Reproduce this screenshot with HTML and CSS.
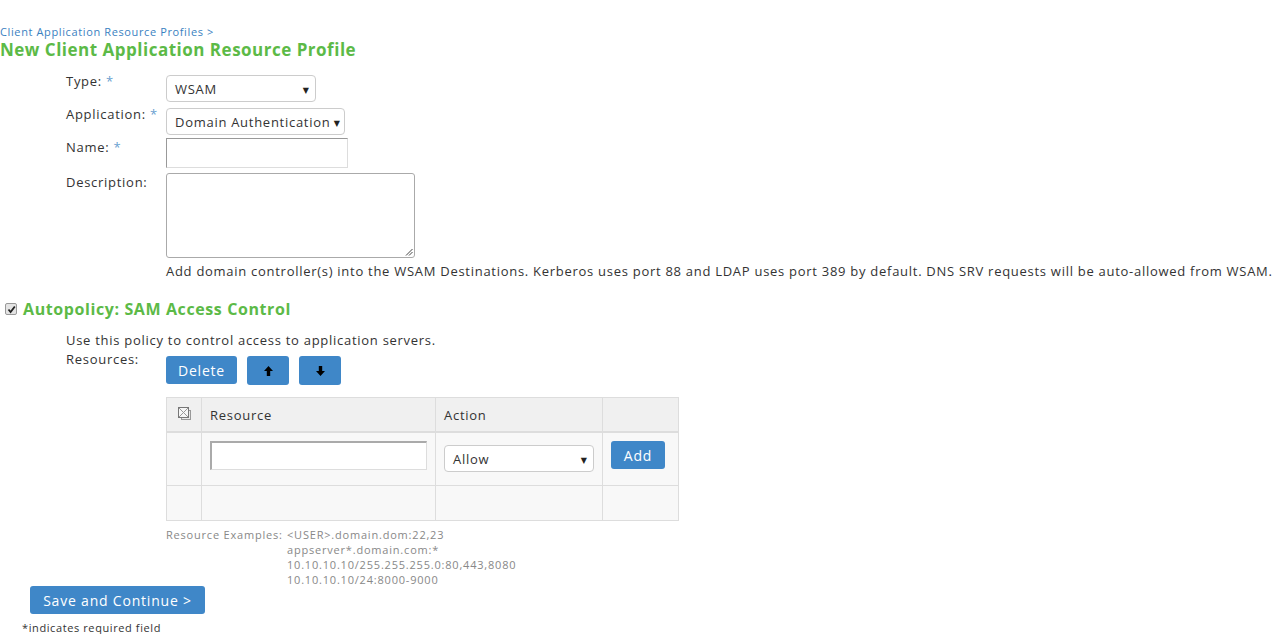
FILE: index.html
```html
<!DOCTYPE html>
<html>
<head>
<meta charset="utf-8">
<link rel="stylesheet" href="styles.css">
</head>
<body>
<div class="page">
  <div class="crumb"><a href="#">Client Application Resource Profiles</a> &gt;</div>
  <h1 class="title">New Client Application Resource Profile</h1>

  <div class="form">
    <div class="row r-type">
      <div class="label">Type: <span class="req">*</span></div>
      <div class="field f-sel"><div class="select s-type"><span>WSAM</span><span class="caret">▼</span></div></div>
    </div>
    <div class="row r-app">
      <div class="label">Application: <span class="req">*</span></div>
      <div class="field f-sel"><div class="select s-app"><span>Domain Authentication</span><span class="caret">▼</span></div></div>
    </div>
    <div class="row r-name">
      <div class="label">Name: <span class="req">*</span></div>
      <div class="field"><div class="input i-name"></div></div>
    </div>
    <div class="row r-desc">
      <div class="label">Description:</div>
      <div class="field">
        <div class="textarea"><svg class="grip" width="9" height="9" viewBox="0 0 9 9"><path d="M8.5 2 L2 8.5 M8.5 5 L5 8.5" stroke="#444" stroke-width="1"/></svg></div>
        <div class="help">Add domain controller(s) into the WSAM Destinations. Kerberos uses port 88 and LDAP uses port 389 by default. DNS SRV requests will be auto-allowed from WSAM.</div>
      </div>
    </div>
  </div>

  <div class="section">
    <span class="check"><svg width="9" height="9" viewBox="0 0 9 9"><path d="M1.5 4.5 L3.6 7 L7.8 1.5" fill="none" stroke="#222" stroke-width="1.8"/></svg></span>
    <h2 class="subtitle">Autopolicy: SAM Access Control</h2>
  </div>

  <div class="policy">
    <div class="intro">Use this policy to control access to application servers.</div>
    <div class="res-row">
      <div class="label">Resources:</div>
      <div class="field">
        <div class="toolbar">
          <button class="btn btn-del">Delete</button>
          <button class="btn btn-arrow"><svg width="9" height="10" viewBox="0 0 9 10"><path d="M4.5 0 L9 5 L6.2 5 L6.2 10 L2.8 10 L2.8 5 L0 5 Z" fill="#000"/></svg></button>
          <button class="btn btn-arrow"><svg width="9" height="10" viewBox="0 0 9 10"><path d="M4.5 10 L9 5 L6.2 5 L6.2 0 L2.8 0 L2.8 5 L0 5 Z" fill="#000"/></svg></button>
        </div>
        <div class="table">
          <div class="cell hd c1"><svg width="13" height="13" viewBox="0 0 13 13"><rect x="3.5" y="3.5" width="9" height="9" fill="#e8e8e8" stroke="#999"/><rect x="0.5" y="0.5" width="10" height="10" fill="#f6f6f6" stroke="#777"/><path d="M1 1 L10 10 M10 1 L1 10" stroke="#999"/></svg></div>
          <div class="cell hd">Resource</div>
          <div class="cell hd">Action</div>
          <div class="cell hd"></div>
          <div class="cell bd"></div>
          <div class="cell bd"><div class="input i-res"></div></div>
          <div class="cell bd"><div class="select s-allow"><span>Allow</span><span class="caret">▼</span></div></div>
          <div class="cell bd"><button class="btn btn-add">Add</button></div>
          <div class="cell ft"></div>
          <div class="cell ft"></div>
          <div class="cell ft"></div>
          <div class="cell ft"></div>
        </div>
        <div class="examples">
          <div class="ex-label">Resource Examples:</div>
          <div class="ex-list">
            <div>&lt;USER&gt;.domain.dom:22,23</div>
            <div>appserver*.domain.com:*</div>
            <div>10.10.10.10/255.255.255.0:80,443,8080</div>
            <div>10.10.10.10/24:8000-9000</div>
          </div>
        </div>
      </div>
    </div>
  </div>

  <div class="actions">
    <button class="btn btn-save">Save and Continue &gt;</button>
  </div>
  <div class="note">*indicates required field</div>
</div>
</body>
</html>
```

FILE: styles.css
```css
* { box-sizing: border-box; }
html, body { margin: 0; padding: 0; background: #fff; }
body {
  font-family: "Open Sans", "DejaVu Sans", sans-serif;
  font-size: 13px;
  letter-spacing: 0.72px;
  color: #333;
}
.page { padding-top: 24px; }
.crumb { font-size: 11px; line-height: 16px; letter-spacing: 0.62px; color: #3a7fc1; }
.crumb a { color: #3a7fc1; text-decoration: none; }
.title {
  margin: 0;
  font-size: 17px;
  line-height: 20px;
  letter-spacing: 0.5px;
  font-weight: 700;
  color: #5cba47;
}
.form { padding-left: 66px; margin-top: 12px; }
.row { display: flex; align-items: flex-start; }
.label { width: 100px; line-height: 18px; flex: none; }
.req { color: #6a9fd0; }
.field { display: flex; flex-direction: column; }
.f-sel { padding-top: 3px; }
.r-type { height: 33px; }
.r-app { height: 33px; }
.r-name { height: 35px; }
.select {
  display: flex;
  align-items: center;
  justify-content: space-between;
  height: 27px;
  border: 1px solid #ccc;
  border-radius: 4px;
  padding: 1px 6px 0 8px;
  background: #fff;
  color: #333;
}
.caret { font-size: 8px; color: #222; letter-spacing: 0; }
.s-type { width: 150px; }
.s-app { width: 179px; padding-right: 4px; }
.input {
  border: 1px solid #ddd;
  border-top: 2px solid #aaa;
  border-left: 2px solid #aaa;
  background: #fff;
}
.i-name { width: 182px; height: 30px; border-top: 1px solid #999; border-left: 1px solid #999; }
.textarea {
  position: relative;
  width: 249px;
  height: 85px;
  border: 1px solid #aaa;
  border-radius: 3px;
}
.grip { position: absolute; right: 1px; bottom: 1px; }
.help { white-space: nowrap; margin-top: 4px; line-height: 18px; }

.section { display: flex; align-items: center; margin-top: 18px; padding-left: 5px; }
.check {
  width: 12px; height: 12px;
  border: 1px solid #999;
  border-radius: 2px;
  background: #e4e4e4;
  display: flex; align-items: center; justify-content: center;
}
.subtitle { margin: 0 0 0 6px; font-size: 16px; letter-spacing: 0.6px; font-weight: 700; color: #5cba47; line-height: 22px; }

.policy { padding-left: 66px; margin-top: 11px; }
.intro { line-height: 18px; }
.res-row { display: flex; margin-top: 1px; }
.toolbar { display: flex; gap: 10px; margin-top: 6px; }
.btn {
  border: 0;
  border-radius: 3px;
  background: #3f87c8;
  color: #fff;
  font-family: inherit;
  font-size: 14px;
  letter-spacing: 0.8px;
  padding: 0;
  display: inline-flex; align-items: center; justify-content: center;
}
.btn-del { width: 71px; height: 28px; }
.btn-arrow { width: 42px; height: 29px; }
.table {
  margin-top: 12px;
  display: grid;
  grid-template-columns: 35px 234px 167px 76px;
  grid-template-rows: 35px 53px 35px;
  width: 513px;
  border-top: 1px solid #ddd;
  border-left: 1px solid #ddd;
}
.cell { border-right: 1px solid #ddd; border-bottom: 1px solid #ddd; background: #f8f8f8; }
.hd { background: #f0f0f0; padding: 8px 8px; line-height: 18px; border-bottom: 2px solid #ddd; }
.c1 { display: flex; align-items: center; justify-content: center; padding: 0 0 2px 0; }
.bd { padding: 8px 8px 0 8px; }
.i-res { width: 217px; height: 29px; }
.s-allow { width: 150px; margin-top: 4px; }
.btn-add { width: 54px; height: 28px; }

.examples { display: flex; font-size: 11px; letter-spacing: 0.8px; color: #888; line-height: 15px; margin-top: 6px; }
.ex-label { width: 121px; }
.actions { padding-left: 30px; margin-top: -1px; }
.btn-save { width: 175px; height: 28px; }
.note { font-size: 11px; letter-spacing: 0.6px; padding-left: 22px; margin-top: 7px; line-height: 13px; color: #333; }
```
